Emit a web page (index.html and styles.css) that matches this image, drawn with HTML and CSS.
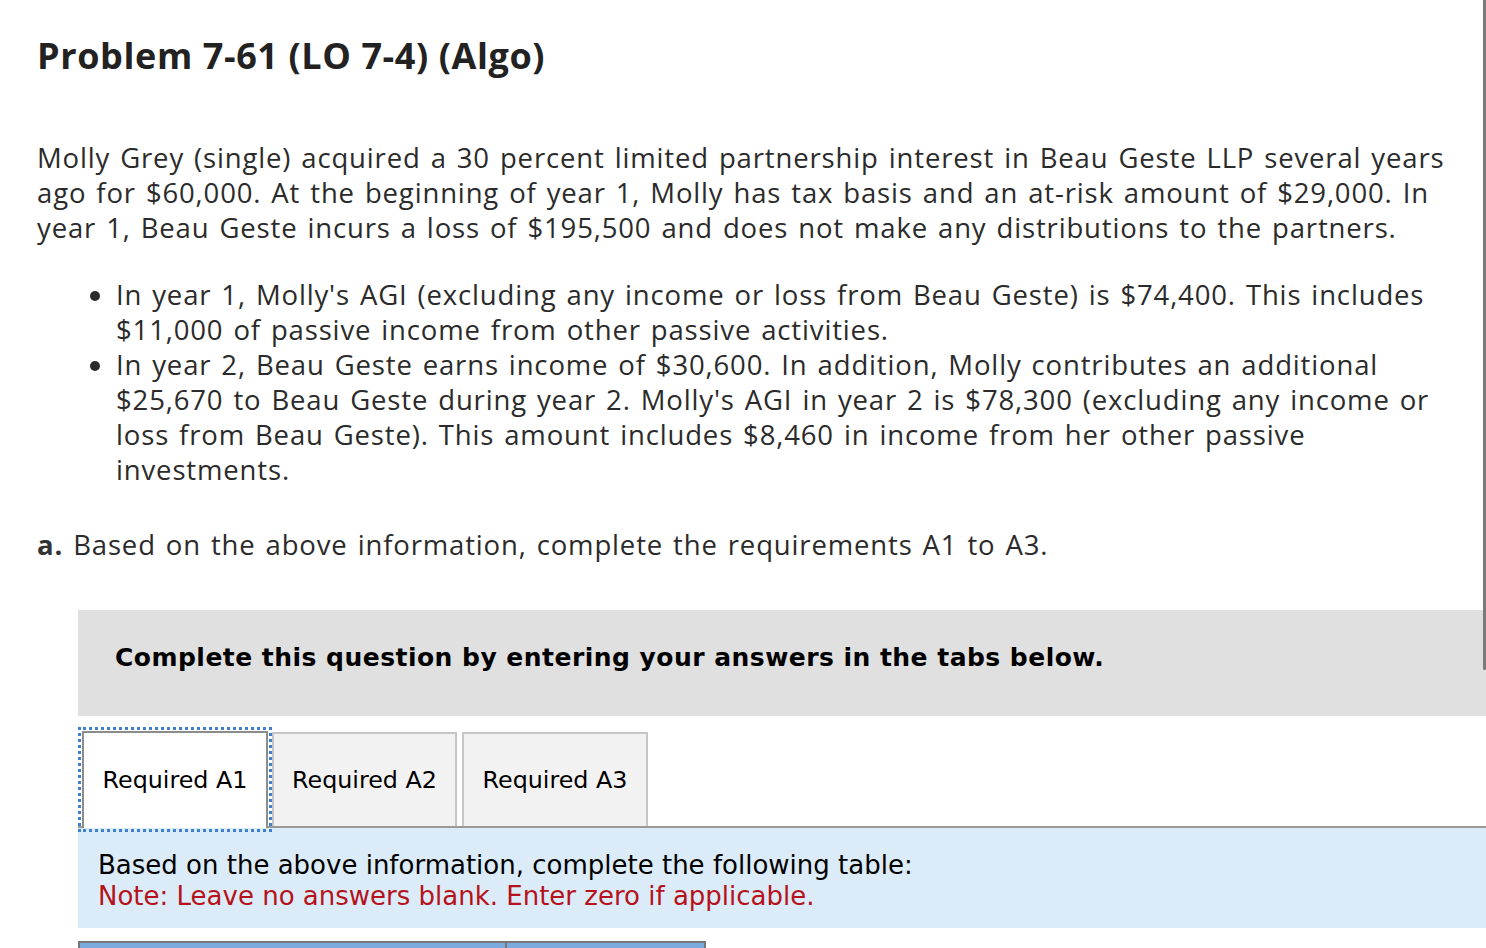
FILE: index.html
```html
<!DOCTYPE html>
<html lang="en">
<head>
<meta charset="utf-8">
<title>Problem 7-61</title>
<link rel="stylesheet" href="styles.css">
</head>
<body>
<div class="page">
  <h1 class="title">Problem 7-61 (LO 7-4) (Algo)</h1>
  <p class="intro">Molly Grey (single) acquired a 30 percent limited partnership interest in Beau Geste LLP several years<br>ago for $60,000. At the beginning of year 1, Molly has tax basis and an at-risk amount of $29,000. In<br>year 1, Beau Geste incurs a loss of $195,500 and does not make any distributions to the partners.</p>
  <ul class="facts">
    <li>In year 1, Molly's AGI (excluding any income or loss from Beau Geste) is $74,400. This includes<br>$11,000 of passive income from other passive activities.</li>
    <li>In year 2, Beau Geste earns income of $30,600. In addition, Molly contributes an additional<br>$25,670 to Beau Geste during year 2. Molly's AGI in year 2 is $78,300 (excluding any income or<br>loss from Beau Geste). This amount includes $8,460 in income from her other passive<br>investments.</li>
  </ul>
  <p class="part"><b>a.</b> Based on the above information, complete the requirements A1 to A3.</p>

  <div class="question">
    <div class="banner">Complete this question by entering your answers in the tabs below.</div>
    <div class="tabs">
      <div class="tab active">Required A1</div>
      <div class="tab">Required A2</div>
      <div class="tab">Required A3</div>
    </div>
    <div class="instructions">
      <div>Based on the above information, complete the following table:</div>
      <div class="note">Note: Leave no answers blank. Enter zero if applicable.</div>
    </div>
    <div class="table-head">
      <div class="th th-wide"></div>
      <div class="th th-narrow"></div>
    </div>
  </div>
</div>
<div class="edge"></div>
</body>
</html>
```
FILE: styles.css
```css
html, body {
  margin: 0;
  padding: 0;
  background: #ffffff;
  overflow: hidden;
}

.page {
  padding-left: 37px;
  padding-top: 34px;
  color: #2b2b2b;
  font-family: "Open Sans", "Liberation Sans", sans-serif;
}

.title {
  margin: 0;
  font-size: 36px;
  line-height: 44px;
  font-weight: 700;
  letter-spacing: 0.6px;
  color: #222222;
}

.intro,
.facts,
.part {
  font-size: 27.5px;
  line-height: 35px;
  letter-spacing: 0.85px;
  word-spacing: 2px;
}

.intro {
  margin: 62px 0 0 0;
  white-space: nowrap;
}

.facts {
  margin: 32px 0 0 0;
  padding-left: 79px;
  white-space: nowrap;
}

.part {
  margin: 40px 0 0 0;
}

.part b {
  font-weight: 700;
  color: #333333;
}

.question {
  margin: 48px 0 0 41px;
  font-family: "DejaVu Sans", Verdana, sans-serif;
  color: #000000;
}

.banner {
  background: #e0e0e0;
  height: 106px;
  box-sizing: border-box;
  padding-left: 37px;
  padding-bottom: 12px;
  display: flex;
  align-items: center;
  font-size: 25px;
  letter-spacing: 0.47px;
  font-weight: 700;
}

.tabs {
  display: flex;
  align-items: flex-end;
  margin-top: 16px;
  height: 94px;
  border-bottom: 2px solid #999999;
}

.tab {
  box-sizing: border-box;
  height: 94px;
  display: flex;
  align-items: center;
  justify-content: center;
  font-size: 23.8px;
  background: #f2f2f2;
  border: 2px solid #c6c6c6;
  border-bottom: none;
  margin-right: 5px;
}

.tab:nth-child(2) { width: 185px; }
.tab:nth-child(3) { width: 186px; margin-right: 0; }

.tab.active {
  width: 186px;
  height: 97px;
  margin-bottom: -2px;
  padding-bottom: 1px;
  background: #ffffff;
  border: 2px solid #8c8c8c;
  border-bottom: none;
  outline: 3px dotted #3f7fcb;
  outline-offset: 1px;
  margin-left: 4px;
  margin-right: 4px;
}

.instructions {
  background: #dbebf7;
  height: 100px;
  box-sizing: border-box;
  padding: 22px 20px 0 20px;
  font-size: 26px;
  line-height: 31px;
}

.note {
  color: #b5121b;
}

.table-head {
  display: flex;
  margin-top: 13px;
  width: 628px;
  height: 30px;
  box-sizing: border-box;
  border: 2px solid #777777;
  border-bottom: none;
  background: #7aaade;
}

.th-wide {
  width: 425px;
  border-right: 2px solid #777777;
}

.edge {
  position: fixed;
  top: 0;
  right: 0;
  width: 3px;
  height: 670px;
  background: #7b7b7b;
  border-radius: 0 0 2px 2px;
}
```
